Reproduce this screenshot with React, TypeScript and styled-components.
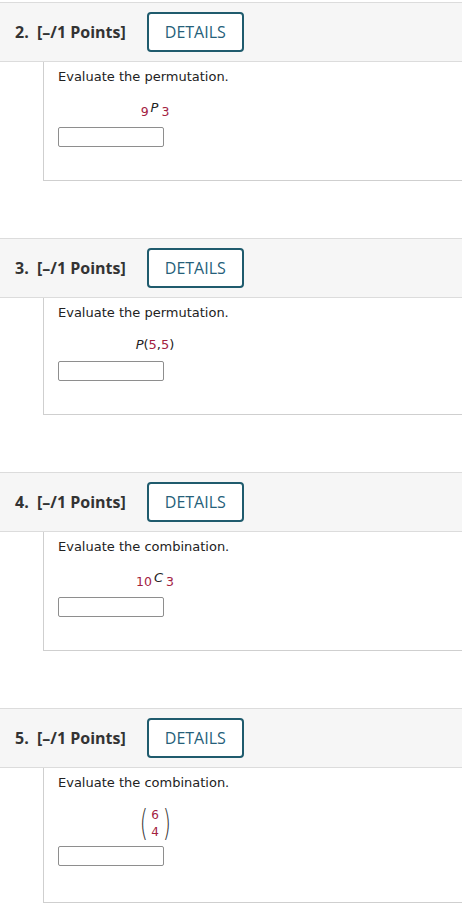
import React from 'react';
import styled, { createGlobalStyle } from 'styled-components';

const GlobalStyle = createGlobalStyle`
  body {
    margin: 0;
    background: #fff;
  }
`;

const Page = styled.div`
  padding-top: 2px;
  width: 462px;
  display: flex;
  flex-direction: column;
  gap: 57px;
`;

const Header = styled.div`
  display: flex;
  align-items: center;
  gap: 21px;
  height: 58px;
  padding-left: 15px;
  background: #f6f6f6;
  border-top: 1px solid #dcdcdc;
  border-bottom: 1px solid #dcdcdc;
`;

const Title = styled.span`
  font-family: 'Open Sans', 'Liberation Sans', sans-serif;
  font-weight: 700;
  font-size: 16px;
  color: #333;
  white-space: pre;
`;

const DetailsButton = styled.button`
  width: 97px;
  height: 40px;
  background: #fff;
  border: 2px solid #1f5b6d;
  border-radius: 4px;
  font-family: 'Open Sans', 'Liberation Sans', sans-serif;
  font-size: 16px;
  color: #265f7a;
  padding: 0;
`;

const Body = styled.div<{ tall?: boolean }>`
  margin-left: 43px;
  border-left: 1px solid #cfcfcf;
  border-bottom: 1px solid #cfcfcf;
  padding: 7px 0 ${(p) => (p.tall ? '36px' : '33px')} 14px;
  display: flex;
  flex-direction: column;
`;

const Prompt = styled.div`
  font-family: 'DejaVu Sans', Verdana, sans-serif;
  font-size: 13px;
  line-height: 16px;
  color: #222;
`;

const MathLine = styled.div<{ $h: number }>`
  width: 194px;
  height: ${(p) => p.$h}px;
  margin: 15px 0 ${(p) => (p.$h > 20 ? '6px' : '7px')};
  display: flex;
  justify-content: center;
  align-items: center;
  font-family: 'DejaVu Sans', Verdana, sans-serif;
  font-size: 13px;
  line-height: 16px;
  color: #222;
`;

const Num = styled.span<{ low?: boolean }>`
  color: #a3213f;
  font-size: ${(p) => (p.low ? '12.5px' : '13px')};
  vertical-align: ${(p) => (p.low ? '-3px' : 'baseline')};
`;

const Var = styled.span<{ spaced?: boolean }>`
  font-style: italic;
  font-size: 13px;
  vertical-align: ${(p) => (p.spaced ? '1px' : 'baseline')};
  margin: ${(p) => (p.spaced ? '0 3px 0 2px' : '0')};
`;

const Binom = styled.span`
  display: inline-flex;
  align-items: center;
  gap: 1px;
`;

const Paren = styled.span`
  display: inline-block;
  font-family: 'DejaVu Sans', sans-serif;
  font-weight: 200;
  font-size: 35px;
  line-height: 34px;
  color: #333;
  transform: scaleX(0.6);
`;

const Stack = styled.span`
  display: inline-flex;
  flex-direction: column;
  align-items: center;
  gap: 3px;
  font-family: 'DejaVu Sans', sans-serif;
  font-size: 12px;
  line-height: 14px;
  color: #a3213f;
`;

const Answer = styled.input`
  display: block;
  box-sizing: border-box;
  width: 106px;
  height: 20px;
  border: 1px solid #8e8e8e;
  border-radius: 2px;
  background: #fff;
`;

type Q = { n: number; prompt: string; math: React.ReactNode; h: number };

const questions: Q[] = [
  {
    n: 2,
    prompt: 'Evaluate the permutation.',
    h: 20,
    math: (
      <span>
        <Num low>9</Num>
        <Var spaced>P</Var>
        <Num low>3</Num>
      </span>
    ),
  },
  {
    n: 3,
    prompt: 'Evaluate the permutation.',
    h: 18,
    math: (
      <span>
        <Var>P</Var>(<Num>5</Num>,<Num>5</Num>)
      </span>
    ),
  },
  {
    n: 4,
    prompt: 'Evaluate the combination.',
    h: 20,
    math: (
      <span>
        <Num low>10</Num>
        <Var spaced>C</Var>
        <Num low>3</Num>
      </span>
    ),
  },
  {
    n: 5,
    prompt: 'Evaluate the combination.',
    h: 34,
    math: (
      <Binom>
        <Paren>(</Paren>
        <Stack>
          <span>6</span>
          <span>4</span>
        </Stack>
        <Paren>)</Paren>
      </Binom>
    ),
  },
];

const App = () => {
  return (
    <>
      <GlobalStyle />
      <Page>
        {questions.map((q) => (
          <section key={q.n}>
            <Header>
              <Title>{`${q.n}.  [–/1 Points]`}</Title>
              <DetailsButton type="button">DETAILS</DetailsButton>
            </Header>
            <Body tall={q.h > 20}>
              <Prompt>{q.prompt}</Prompt>
              <MathLine $h={q.h}>{q.math}</MathLine>
              <Answer type="text" />
            </Body>
          </section>
        ))}
      </Page>
    </>
  );
};

export default App;
